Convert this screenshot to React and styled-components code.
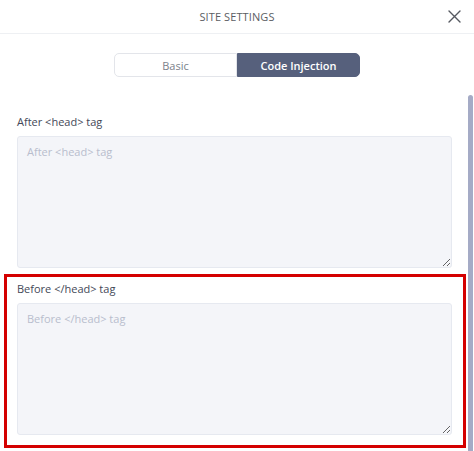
import React from 'react'
import styled, { createGlobalStyle } from 'styled-components'

const GlobalStyle = createGlobalStyle`
  * { box-sizing: border-box; }
  body {
    margin: 0;
    background: #fff;
    font-family: "Open Sans", "Noto Sans", sans-serif;
  }
`

const Modal = styled.div`
  position: relative;
  width: 474px;
  height: 451px;
  overflow: hidden;
  background: #fff;
`

const Header = styled.header`
  height: 34px;
  display: grid;
  grid-template-columns: 1fr auto 1fr;
  align-items: center;
  border-bottom: 1px solid #eef0f3;
`

const Title = styled.h1`
  grid-column: 2;
  margin: 0;
  font-size: 11px;
  font-weight: 400;
  color: #5b5d63;
  letter-spacing: 0.1px;
  text-transform: uppercase;
`

const Close = styled.button`
  justify-self: end;
  margin-right: 13px;
  width: 14px;
  height: 14px;
  padding: 0;
  border: 0;
  background: none;
  display: flex;
  align-items: center;
  justify-content: center;
  cursor: pointer;
`

const Body = styled.div`
  padding: 19px 22px 0 17px;
`

const TabRow = styled.div`
  display: flex;
  justify-content: center;
  padding-left: 5px;
  margin-bottom: 37px;
`

const Tab = styled.button`
  width: 123px;
  height: 24px;
  padding: 0;
  font-family: inherit;
  font-size: 11px;
  cursor: pointer;
  border: 1px solid ${p => (p.$active ? '#56607c' : '#e3e5ea')};
  background: ${p => (p.$active ? '#56607c' : '#fff')};
  color: ${p => (p.$active ? '#fff' : '#7b7f8a')};
  font-weight: ${p => (p.$active ? 600 : 400)};
  border-radius: ${p => (p.$first ? '5px 0 0 5px' : '0 5px 5px 0')};
`

const Field = styled.div`
  position: relative;
  margin-bottom: 13px;

  ${p => p.$highlight && `
    &::after {
      content: '';
      position: absolute;
      top: -7px;
      left: -13px;
      right: -14px;
      bottom: -13px;
      border: 3px solid #d40000;
      pointer-events: none;
    }
  `}
`

const Label = styled.label`
  display: block;
  font-size: 11px;
  line-height: 16px;
  color: #434857;
  margin-bottom: 6px;
`

const Area = styled.textarea`
  display: block;
  width: 100%;
  height: 132px;
  padding: 7px 9px;
  border: 1px solid #e6e9f0;
  border-radius: 3px;
  background: #f4f5f9;
  font-family: inherit;
  font-size: 11px;
  line-height: 16px;
  color: #434857;
  resize: vertical;
  outline: none;

  &::placeholder {
    color: #b8bdcd;
  }
`

const ScrollThumb = styled.div`
  position: absolute;
  top: 95px;
  right: 1px;
  width: 5px;
  bottom: 0;
  border-radius: 3px 3px 0 0;
  background: #a5abc6;
`

const fields = [
  { id: 'after', label: 'After <head> tag' },
  { id: 'before', label: 'Before </head> tag', highlight: true },
]

export default function App() {
  return (
    <>
      <GlobalStyle />
      <Modal>
        <Header>
          <Title>Site Settings</Title>
          <Close aria-label="Close">
            <svg width="13" height="13" viewBox="0 0 13 13">
              <path d="M1 1L12 12M12 1L1 12" stroke="#555860" strokeWidth="1.4" strokeLinecap="round" />
            </svg>
          </Close>
        </Header>
        <Body>
          <TabRow>
            <Tab $first>Basic</Tab>
            <Tab $active>Code Injection</Tab>
          </TabRow>
          {fields.map(f => (
            <Field key={f.id} $highlight={f.highlight}>
              <Label htmlFor={f.id}>{f.label}</Label>
              <Area id={f.id} placeholder={f.label} />
            </Field>
          ))}
        </Body>
        <ScrollThumb />
      </Modal>
    </>
  )
}
